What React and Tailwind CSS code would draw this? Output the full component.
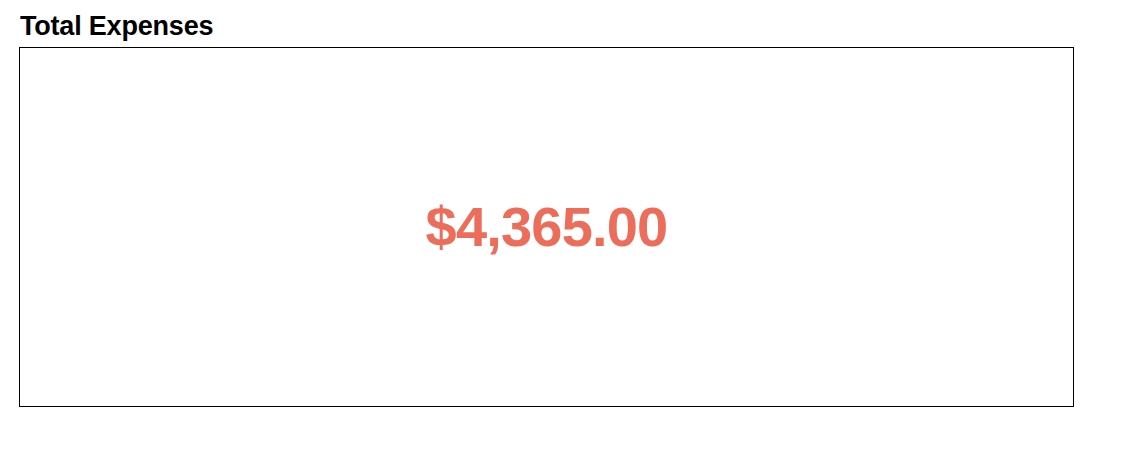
export default function App() {
  return (
    <div className="w-[1146px] h-[472px] bg-white pl-[19px] pt-[11px]" style={{ fontFamily: '"Liberation Sans", Arial, sans-serif' }}>
      <h2 className="text-[27px] leading-[31px] font-bold text-black pl-[1px] mb-[5px] tracking-[-0.2px]">Total Expenses</h2>
      <div className="w-[1055px] h-[360px] border border-black flex items-center justify-center">
        <span className="text-[56px] leading-none font-bold text-[#ec6e5a] tracking-[-0.8px]">$4,365.00</span>
      </div>
    </div>
  );
}
